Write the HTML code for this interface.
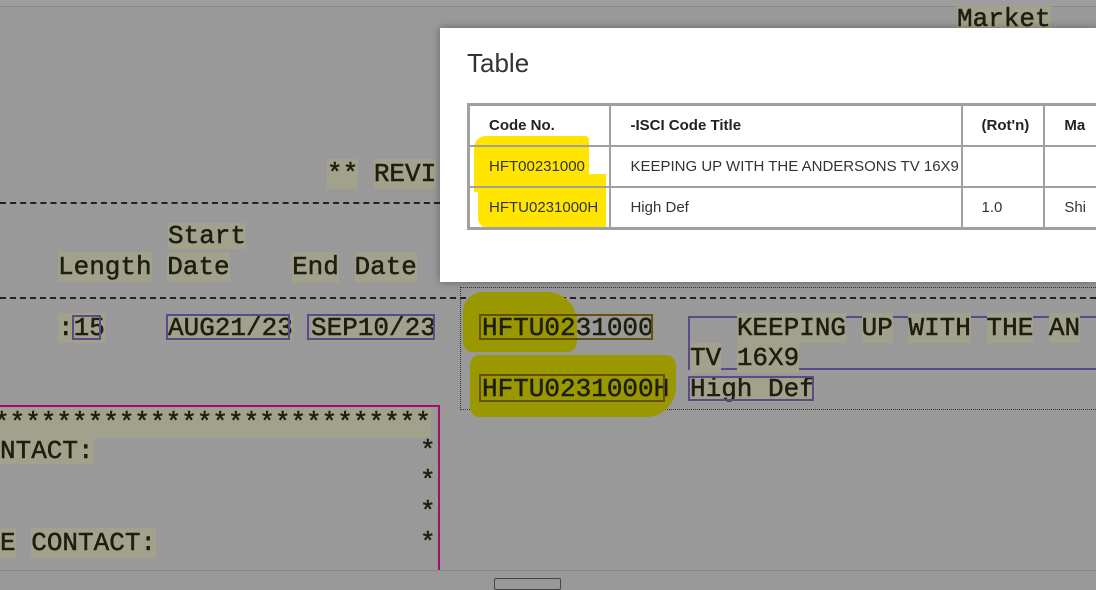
<!DOCTYPE html>
<html><head><meta charset="utf-8"><style>
*{margin:0;padding:0;box-sizing:border-box}
body{width:1096px;height:586px;overflow:hidden;background:#999;position:relative;font-family:"Liberation Mono",monospace}
.t{position:absolute;font-size:26px;font-weight:normal;color:#1e1e10;line-height:26px;white-space:pre;-webkit-text-stroke:0.5px #1e1e10}
.h{background:#a2a28c}
.b{position:absolute;border:2px solid #5a4a8a}
.dash{position:absolute;left:0;height:0;border-top:2px dashed #222}
.y{position:absolute;background:#999800}
.m{position:absolute;left:440px;top:28px;width:660px;height:254px;background:#fff;box-shadow:0 0 8px rgba(0,0,0,.35);font-family:"Liberation Sans",sans-serif}
table{position:absolute;left:27px;top:75px;border-collapse:separate;border-spacing:0;border:2px solid #a0a0a0}
td{border:1px solid #a0a0a0;height:41px;font-size:15px;color:#333;padding-left:19px;white-space:nowrap}
th{border:1px solid #a0a0a0;height:41px;font-size:15px;color:#222;text-align:left;padding-left:19px;font-weight:bold}
.yy{position:absolute;background:#ffe500}
</style></head><body>
<div style="position:absolute;left:0;top:0;width:1096px;height:7px;background:#9d9d9d;border-bottom:1px solid #8a8a8a"></div>
<div class="t h" style="left:957px;top:6px">Market</div>
<div class="t" style="left:327px;top:161px"><span class="h">**</span> <span class="h">REVI</span></div>
<div class="dash" style="top:202px;width:440px"></div>
<div class="t h" style="left:168px;top:223px">Start</div>
<div class="t" style="left:58px;top:254px"><span class="h">Length</span> <span class="h">Date</span>    <span class="h">End</span> <span class="h">Date</span></div>
<div class="dash" style="top:297px;width:1096px"></div>
<div class="t" style="left:58px;top:315px"><span class="h">:15</span></div>
<div class="b" style="left:72px;top:315px;width:29px;height:25px"></div>
<div class="t h" style="left:168px;top:315px">AUG21/23</div>
<div class="b" style="left:166px;top:314px;width:124px;height:26px"></div>
<div class="t h" style="left:311px;top:315px">SEP10/23</div>
<div class="b" style="left:307px;top:314px;width:128px;height:26px"></div>
<div style="position:absolute;left:460px;top:287px;width:640px;height:123px;border:1px dotted #333;border-right:none"></div>
<div class="y" style="left:463px;top:292px;width:114px;height:60px;border-radius:20px 30px 10px 10px"></div>
<div class="y" style="left:470px;top:355px;width:206px;height:62px;border-radius:10px 10px 30px 10px"></div>
<div class="t" style="left:482px;top:315px">HFTU0231000</div>
<div class="b" style="left:479px;top:314px;width:174px;height:26px;border-color:#6a5010"></div>
<div class="b" style="left:688px;top:316px;width:420px;height:54px"></div>
<div class="t" style="left:690px;top:315px">   <span class="h">KEEPING</span> <span class="h">UP</span> <span class="h">WITH</span> <span class="h">THE</span> <span class="h">AN</span></div>
<div class="t" style="left:690px;top:345px"><span class="h">TV</span> <span class="h">16X9</span></div>
<div class="t" style="left:482px;top:376px">HFTU0231000H</div>
<div class="b" style="left:479px;top:374px;width:186px;height:28px;border-color:#6a5010"></div>
<div class="t h" style="left:690px;top:376px">High Def</div>
<div class="b" style="left:688px;top:376px;width:126px;height:25px"></div>
<div style="position:absolute;left:-3px;top:405px;width:443px;height:175px;border:2px solid #a0106a"></div>
<div class="t" style="left:-6px;top:410px"><span class="h">****************************</span></div>
<div class="t h" style="left:0;top:438px">NTACT:</div>
<div class="t" style="left:420px;top:438px">*</div>
<div class="t" style="left:420px;top:468px">*</div>
<div class="t" style="left:420px;top:499px">*</div>
<div class="t" style="left:0;top:530px"><span class="h">E</span> <span class="h">CONTACT:</span></div>
<div class="t" style="left:420px;top:530px">*</div>
<div style="position:absolute;left:0;top:570px;width:1096px;height:16px;background:#999;border-top:1px solid #888"></div>
<div style="position:absolute;left:494px;top:578px;width:67px;height:12px;border:1px solid #444;border-radius:2px"></div>
<div class="m">
<div style="position:absolute;left:27px;top:20px;font-size:26px;color:#333">Table</div>
<div class="yy" style="left:34px;top:108px;width:115px;height:56px;border-radius:12px 4px 0 0"></div>
<div class="yy" style="left:38px;top:146px;width:128px;height:54px;border-radius:0 0 0 10px"></div>
<table>
<tr><th style="width:148px">Code No.</th><th style="width:352px">-ISCI Code Title</th><th style="width:91px">(Rot'n)</th><th style="width:60px">Ma</th></tr>
<tr><td>HFT00231000</td><td>KEEPING UP WITH THE ANDERSONS TV 16X9</td><td></td><td></td></tr>
<tr><td>HFTU0231000H</td><td>High Def</td><td>1.0</td><td>Shi</td></tr>
</table>
</div>
</body></html>
